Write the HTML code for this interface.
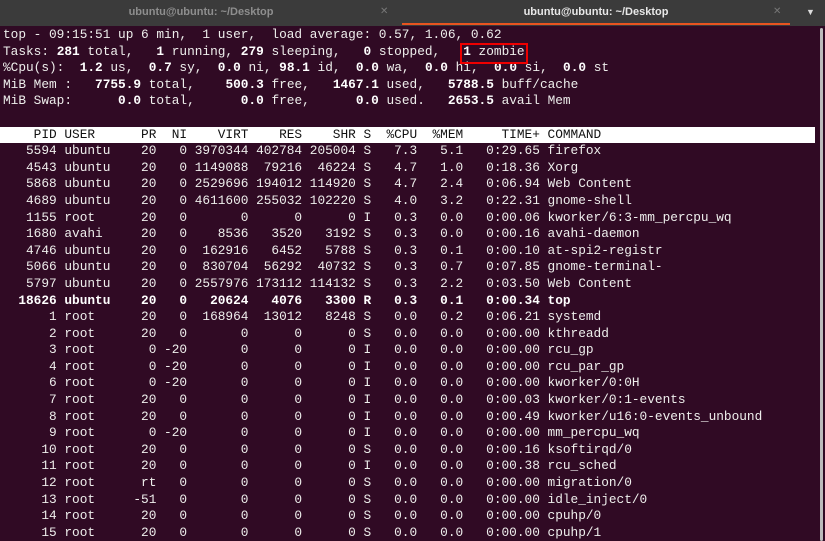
<!DOCTYPE html>
<html><head><meta charset="utf-8"><style>
body{margin:0;width:825px;height:541px;overflow:hidden;background:#300a24;position:relative;font-family:"Liberation Mono",monospace}
.tabs{position:absolute;left:0;top:0;width:825px;height:26px;background:#3b3b3b;font-family:"Liberation Sans",sans-serif;font-size:11px;font-weight:bold}
.t1{position:absolute;left:0;top:0;width:402px;height:26px;line-height:24px;text-align:center;color:#8e8e8e}
.t2{position:absolute;left:402px;top:0;width:388px;height:26px;line-height:24px;text-align:center;color:#e8e8e8}
.ul{position:absolute;left:402px;top:23px;width:388px;height:2px;background:#e95420}
.x{position:absolute;top:0;line-height:24px;color:#777;font-weight:normal;font-size:10px}
pre{position:absolute;left:3px;top:27px;margin:0;font-size:12.8px;line-height:16.6px;color:#eeeeec;font-family:"Liberation Mono",monospace;letter-spacing:-0.01px}
b{font-weight:bold;color:#fff}
.hd{display:block;background:#fff;color:#111;width:812px;margin-left:-3px;padding-left:3px}
.box{position:absolute;left:460px;top:43px;width:64px;height:17px;border:2px solid #e00}
.sb{position:absolute;left:820px;top:28px;width:3px;height:513px;background:#bbb;border-radius:2px}
</style></head><body>
<div class="tabs"><div class="t1">ubuntu@ubuntu: ~/Desktop</div><div class="t2">ubuntu@ubuntu: ~/Desktop</div><div class="ul"></div>
<span class="x" style="left:380px">✕</span><span class="x" style="left:773px">✕</span><span class="x" style="left:806px;color:#ddd;font-size:9px">▼</span></div>
<pre>top - 09:15:51 up 6 min,  1 user,  load average: 0.57, 1.06, 0.62
Tasks: <b>281</b> total,   <b>1</b> running, <b>279</b> sleeping,   <b>0</b> stopped,   <b>1</b> zombie
%Cpu(s):  <b>1.2</b> us,  <b>0.7</b> sy,  <b>0.0</b> ni, <b>98.1</b> id,  <b>0.0</b> wa,  <b>0.0</b> hi,  <b>0.0</b> si,  <b>0.0</b> st
MiB Mem :   <b>7755.9</b> total,    <b>500.3</b> free,   <b>1467.1</b> used,   <b>5788.5</b> buff/cache
MiB Swap:      <b>0.0</b> total,      <b>0.0</b> free,      <b>0.0</b> used.   <b>2653.5</b> avail Mem

<span class="hd">    PID USER      PR  NI    VIRT    RES    SHR S  %CPU  %MEM     TIME+ COMMAND</span>   5594 ubuntu    20   0 3970344 402784 205004 S   7.3   5.1   0:29.65 firefox
   4543 ubuntu    20   0 1149088  79216  46224 S   4.7   1.0   0:18.36 Xorg
   5868 ubuntu    20   0 2529696 194012 114920 S   4.7   2.4   0:06.94 Web Content
   4689 ubuntu    20   0 4611600 255032 102220 S   4.0   3.2   0:22.31 gnome-shell
   1155 root      20   0       0      0      0 I   0.3   0.0   0:00.06 kworker/6:3-mm_percpu_wq
   1680 avahi     20   0    8536   3520   3192 S   0.3   0.0   0:00.16 avahi-daemon
   4746 ubuntu    20   0  162916   6452   5788 S   0.3   0.1   0:00.10 at-spi2-registr
   5066 ubuntu    20   0  830704  56292  40732 S   0.3   0.7   0:07.85 gnome-terminal-
   5797 ubuntu    20   0 2557976 173112 114132 S   0.3   2.2   0:03.50 Web Content
<b>  18626 ubuntu    20   0   20624   4076   3300 R   0.3   0.1   0:00.34 top</b>
      1 root      20   0  168964  13012   8248 S   0.0   0.2   0:06.21 systemd
      2 root      20   0       0      0      0 S   0.0   0.0   0:00.00 kthreadd
      3 root       0 -20       0      0      0 I   0.0   0.0   0:00.00 rcu_gp
      4 root       0 -20       0      0      0 I   0.0   0.0   0:00.00 rcu_par_gp
      6 root       0 -20       0      0      0 I   0.0   0.0   0:00.00 kworker/0:0H
      7 root      20   0       0      0      0 I   0.0   0.0   0:00.03 kworker/0:1-events
      8 root      20   0       0      0      0 I   0.0   0.0   0:00.49 kworker/u16:0-events_unbound
      9 root       0 -20       0      0      0 I   0.0   0.0   0:00.00 mm_percpu_wq
     10 root      20   0       0      0      0 S   0.0   0.0   0:00.16 ksoftirqd/0
     11 root      20   0       0      0      0 I   0.0   0.0   0:00.38 rcu_sched
     12 root      rt   0       0      0      0 S   0.0   0.0   0:00.00 migration/0
     13 root     -51   0       0      0      0 S   0.0   0.0   0:00.00 idle_inject/0
     14 root      20   0       0      0      0 S   0.0   0.0   0:00.00 cpuhp/0
     15 root      20   0       0      0      0 S   0.0   0.0   0:00.00 cpuhp/1</pre>
<div class="box"></div>
<div class="sb"></div>
</body></html>
